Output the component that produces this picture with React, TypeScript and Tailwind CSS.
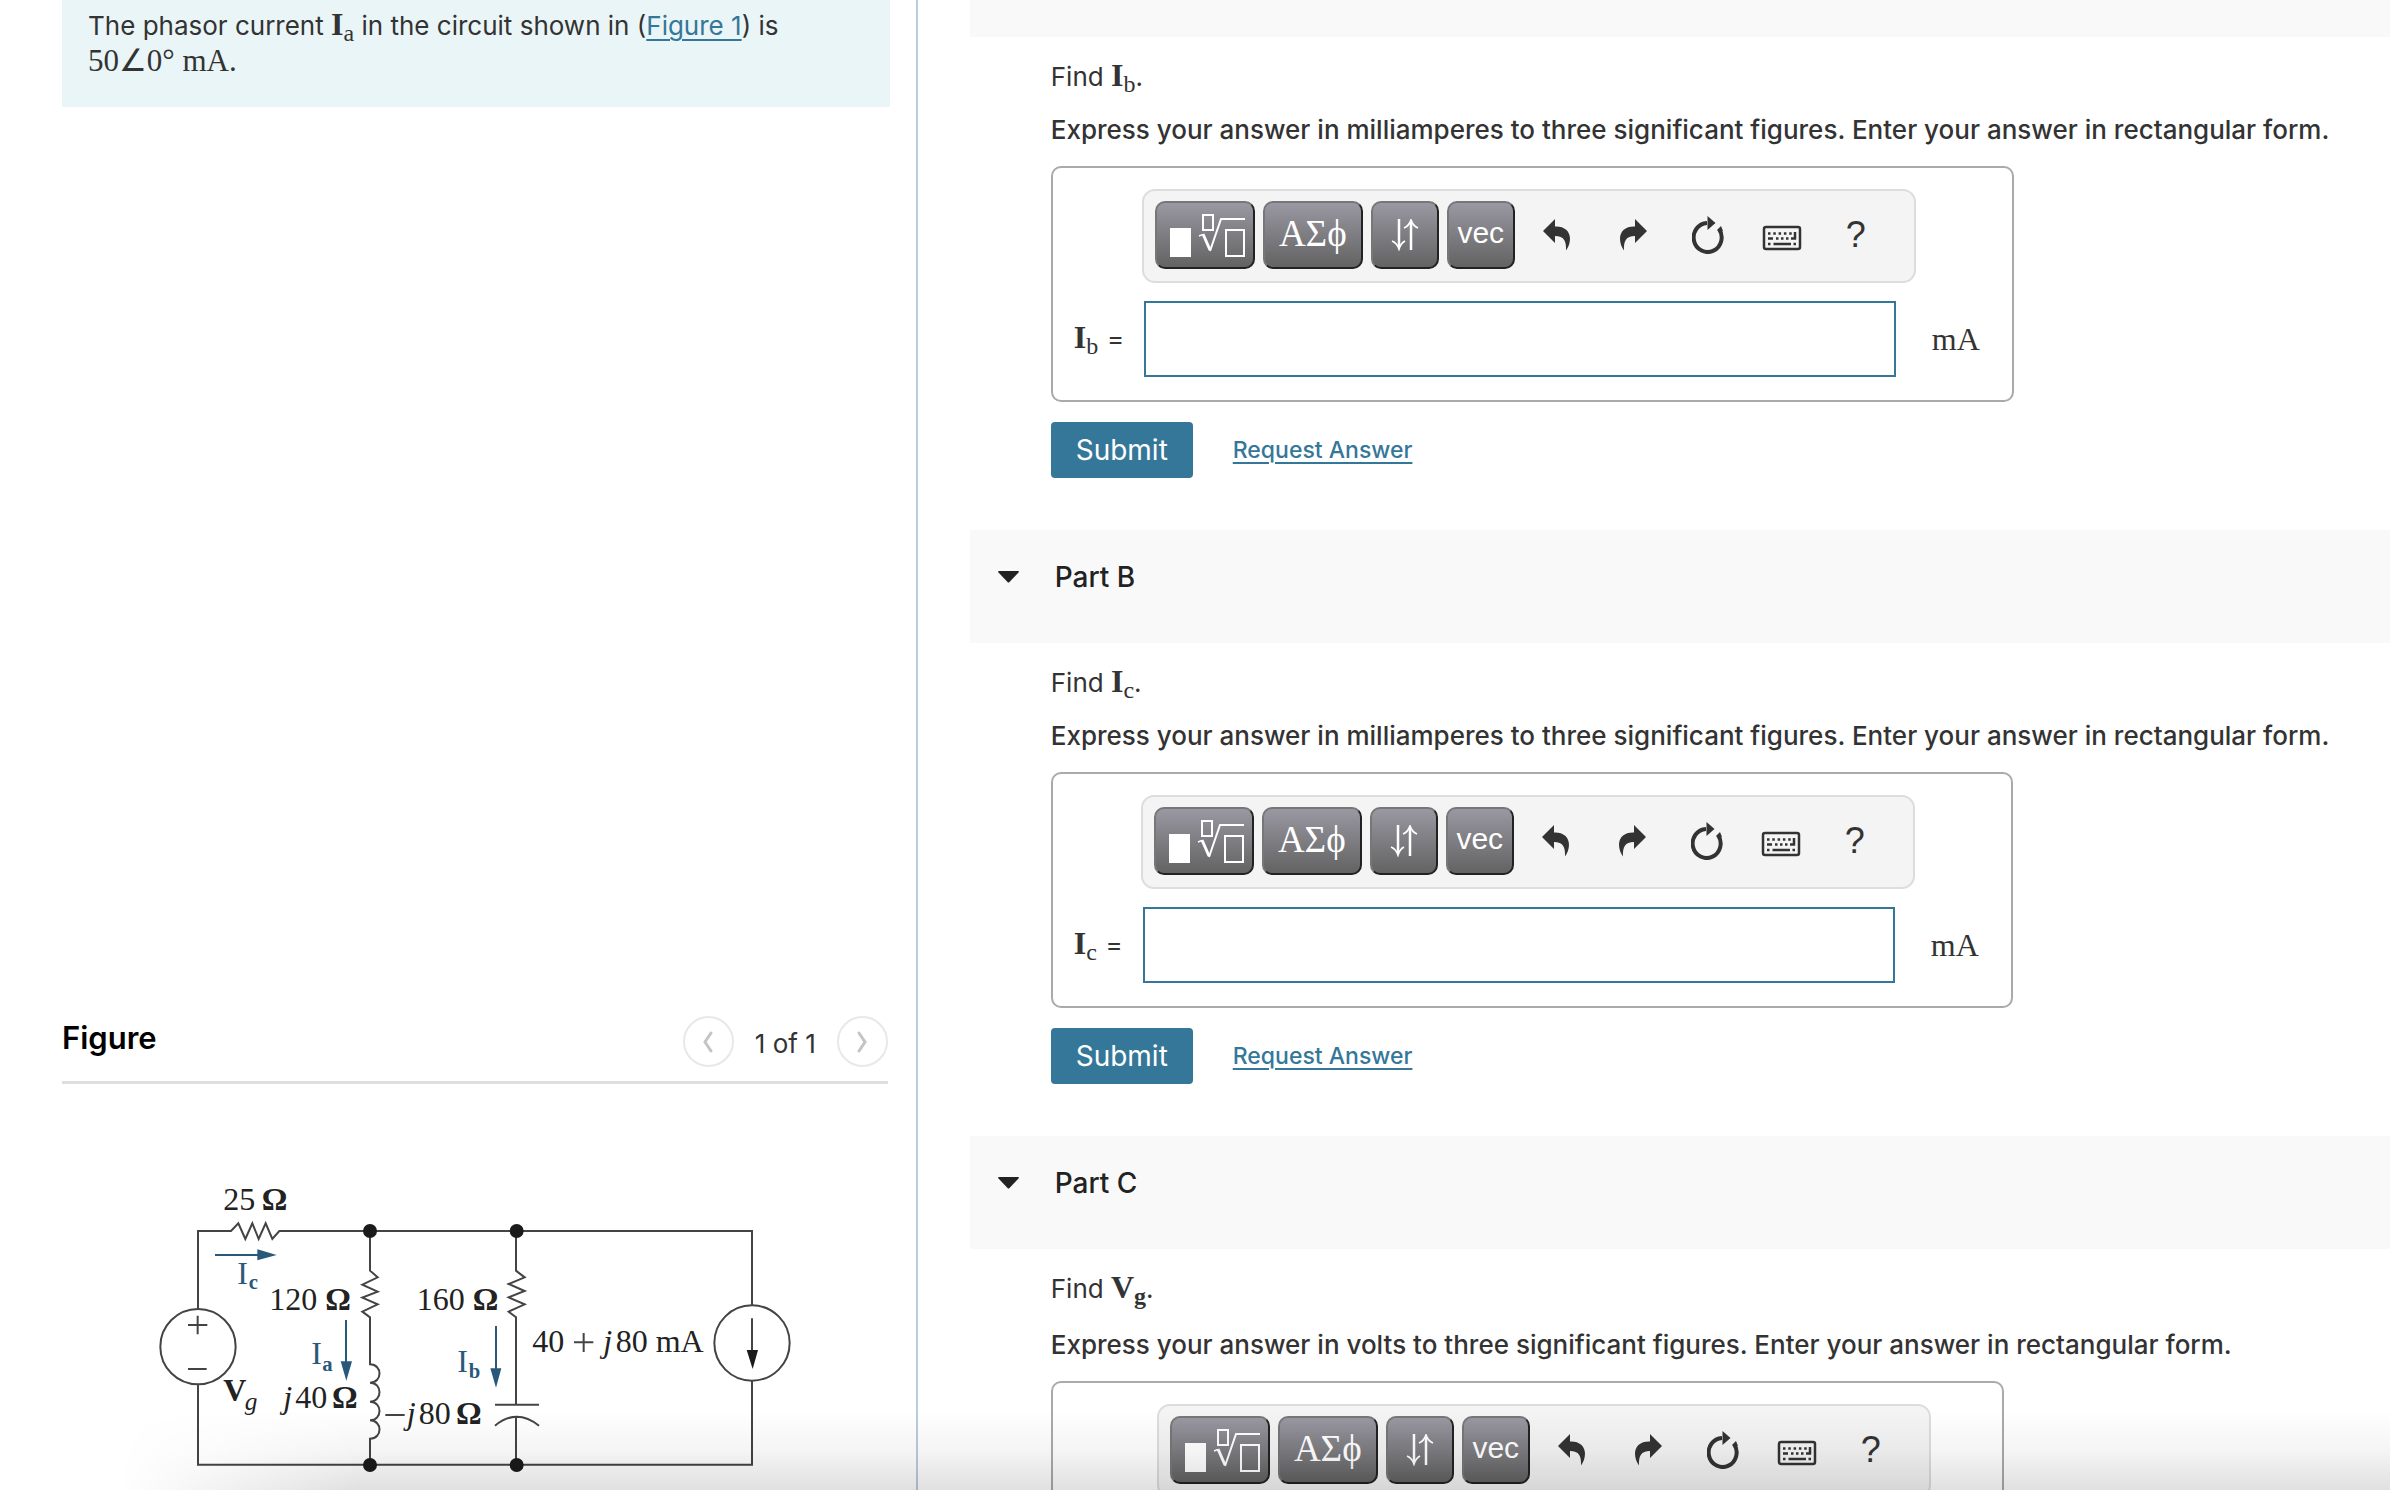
import React from "react";
import type { ReactNode } from "react";

const SERIF = "'Liberation Serif', serif";

function Sym({ base, sub, boldSub = false }: { base: string; sub: string; boldSub?: boolean }) {
  return (
    <span className="font-['Liberation_Serif',serif] text-[32px] leading-none">
      <b>{base}</b>
      <span className={boldSub ? "relative top-[6px] text-[24px] font-bold" : "relative top-[6px] text-[24px]"}>{sub}</span>
    </span>
  );
}

function DarkButton({ wide = false, label, children }: { wide?: boolean; label: string; children: ReactNode }) {
  return (
    <button
      type="button"
      aria-label={label}
      className={
        (wide ? "w-[100px]" : "w-[68px]") +
        " flex h-[68px] items-center justify-center rounded-[10px] border-2 border-t-[#777] border-r-[#222] border-b-[#222] border-l-[#777] bg-linear-to-b from-[#9a98a2] to-[#636363] text-white"
      }
    >
      {children}
    </button>
  );
}

function IconButton({ label, wide = false, children }: { label: string; wide?: boolean; children: ReactNode }) {
  return (
    <button
      type="button"
      aria-label={label}
      className={(wide ? "w-[76px]" : "w-[74px]") + " flex h-[68px] items-center justify-center text-[#333]"}
    >
      {children}
    </button>
  );
}

function CurvedArrow({ flip = false }: { flip?: boolean }) {
  return (
    <svg width="28" height="32" viewBox="0 0 28 32" className={flip ? "-scale-x-100" : ""} fill="currentColor">
      <path d="M0 12 L12 0 V7.500 C21 7 27 12 27 19.500 C27 24 25.500 28 23 31.500 C23.500 22 21 17 12 17 V24 Z" />
    </svg>
  );
}

function Toolbar() {
  return (
    <div className="col-span-2 flex h-[94px] w-[774px] items-start rounded-[13px] border-2 border-[#ddd] bg-[#f4f4f4] pt-2.5 pl-[11px]">
      <div className="flex gap-2">
        <DarkButton wide label="Templates">
          <svg width="84" height="60" viewBox="2 -1 84 60" fill="none" stroke="#fff">
            <rect x="9" y="22" width="21" height="29" fill="#fff" stroke="none" />
            <rect x="42" y="9" width="10" height="15" strokeWidth="2" />
            <path d="M38 30 L42 28.500" strokeWidth="1.500" />
            <path d="M42 28 L49 44" strokeWidth="3" />
            <path d="M49 45 L60 13 H84" strokeWidth="2" />
            <rect x="65" y="24" width="18" height="26" strokeWidth="2" />
          </svg>
        </DarkButton>
        <DarkButton wide label="Symbols">
          <span className="pb-1 font-['Liberation_Serif',serif] text-[37px] leading-none">ΑΣϕ</span>
        </DarkButton>
        <DarkButton label="Swap">
          <svg width="28" height="32" viewBox="0 0 28 32" fill="none" stroke="#fff" strokeWidth="2.500">
            <path d="M8 0 V28 M20 31 V3" />
            <path d="M1 22 Q6 24 8 30 Q10 24 14 22 M13 9 Q18 7 20 1 Q22 7 27 9" strokeWidth="1.800" />
          </svg>
        </DarkButton>
        <DarkButton label="Vector">
          <span className="pb-1 font-['Liberation_Sans',sans-serif] text-[30px] leading-none">vec</span>
        </DarkButton>
      </div>
      <div className="flex pl-1">
        <IconButton label="Undo" wide>
          <CurvedArrow />
        </IconButton>
        <IconButton label="Redo" wide>
          <CurvedArrow flip />
        </IconButton>
        <IconButton label="Reset">
          <svg width="32" height="38" viewBox="0 0 32 38" fill="none">
            <path d="M15 7 A14 14.500 0 1 0 27 13" stroke="currentColor" strokeWidth="4" />
            <path d="M15.500 0 L23.500 7 L15.500 14 Z" fill="currentColor" />
            <path d="M25 14 L29 10 L31 15 Z" fill="currentColor" />
          </svg>
        </IconButton>
        <IconButton label="Keyboard">
          <svg width="40" height="32" viewBox="0 -3 40 32" fill="none" stroke="currentColor">
            <rect x="2" y="5" width="36" height="22" rx="2" strokeWidth="2.500" />
            <path d="M6 11.500 H31" strokeWidth="2.500" strokeDasharray="2.500 2.800" />
            <path d="M6 16.500 H11 M14 16.500 H16.500 M19 16.500 H21.500 M24 16.500 H26.500 M29 16.500 H34 M33 10 V17.500" strokeWidth="2.500" />
            <path d="M6 22 H8.500 M11.500 22 H29 M31.500 22 H34" strokeWidth="2.500" />
          </svg>
        </IconButton>
        <IconButton label="Help">
          <span className="font-['Liberation_Sans',sans-serif] text-[36px] leading-none">?</span>
        </IconButton>
      </div>
    </div>
  );
}

type PartProps = {
  id: string;
  title?: string;
  symbol: ReactNode;
  quantity: string;
  unit: string;
  labelClass: string;
  findClass?: string;
};

function PartHeader({ title }: { title: string }) {
  return (
    <header className="flex h-[113px] bg-[#f9f9f9] pt-[29px] pl-7">
      <button type="button" className="flex h-9 items-center gap-9 text-[28px] leading-9 font-medium text-[#222]">
        <svg width="21" height="12" viewBox="0 0 21 12" fill="currentColor">
          <path d="M1 0 H20 Q21.500 0 20.500 1.500 L11.500 11 Q10.500 12 9.500 11 L0.500 1.500 Q-0.500 0 1 0 Z" />
        </svg>
        {title}
      </button>
    </header>
  );
}

function Part({ id, title, symbol, quantity, unit, labelClass, findClass = "h-9" }: PartProps) {
  return (
    <section>
      {title ? <PartHeader title={title} /> : <header className="h-[37px] bg-[#f9f9f9]" />}
      <div className="pt-[22px] pb-[52px] pl-[81px]">
        <p className={findClass + " text-[26px] leading-9"}>
          Find {symbol}.
        </p>
        <p className="mt-[17px] mb-[18px] text-[26px] leading-9 font-medium whitespace-nowrap">
          Express your answer in {quantity} to three significant figures. Enter your answer in rectangular form.
        </p>
        <div className="grid w-fit grid-cols-[auto_auto_auto] items-center gap-y-[18px] rounded-[10px] border-2 border-[#aaa] pt-[21px] pb-[23px] pl-[21px]">
          <span className={labelClass} />
          <Toolbar />
          <label htmlFor={id} className="text-[24px] leading-9 whitespace-nowrap">
            {symbol} <span className="pl-0.5 text-[26px]">=</span>
          </label>
          <input id={id} type="text" className="ml-0.5 h-[76px] w-[752px] border-2 border-[#357798] bg-white px-3 text-[26px] outline-none" />
          <span className="pr-8 pl-9 font-['Liberation_Serif',serif] text-[32px] leading-9">{unit}</span>
        </div>
        <div className="mt-5 flex items-center gap-10">
          <button type="button" className="h-14 w-[142px] rounded bg-[#357798] text-[28px] leading-none text-white">
            Submit
          </button>
          <a href="#answer" className="text-[23px] font-medium text-[#357798] underline decoration-2 underline-offset-4">
            Request Answer
          </a>
        </div>
      </div>
    </section>
  );
}

function PageButton({ label, path }: { label: string; path: string }) {
  return (
    <button type="button" aria-label={label} className="flex size-[51px] items-center justify-center rounded-full border-2 border-[#e8e8e8]">
      <svg width="16" height="24" viewBox="0 0 16 24" fill="none" stroke="#c4c4c4" strokeWidth="3" strokeLinecap="round">
        <path d={path} />
      </svg>
    </button>
  );
}

const CAPTIONS: [number, number, string][] = [
  [250, 150, "25"],
  [388, 450, "120"],
  [830, 450, "160"],
  [466, 743, "40"],
  [836, 791, "80"],
  [1177, 575, "40"],
  [1427, 575, "80"],
  [1547, 575, "mA"],
];

const OHMS: [number, number][] = [
  [365, 150],
  [556, 450],
  [998, 450],
  [576, 743],
  [948, 791],
];

const JS: [number, number][] = [
  [430, 743],
  [800, 791],
  [1390, 575],
];

function Circuit() {
  return (
    <svg width="660" height="330" viewBox="0 0 1980 990" className="ml-[140px] shrink-0" role="img" aria-label="Circuit diagram">
      <g fill="none" stroke="#444" strokeWidth="6">
        <path d="M174 447 V213 H273 L295 190 L316 237 L337 190 L356 237 L377 190 L397 237 L418 213 H1836 V437" />
        <path d="M174 673 V914 H1836 V662" />
        <circle cx="174" cy="560" r="113" />
        <circle cx="1836" cy="549" r="113" />
        <path d="M173 467 V523 M144 495 H202 M144 627 H200" />
        <path d="M690 213 V332 L713 352 L667 374 L713 395 L667 413 L713 433 L667 455 L690 472 V613 C728 613 728 668 690 668 C728 668 728 725 690 725 C728 725 728 781 690 781 C728 781 728 836 690 836 V914" />
        <path d="M1128 213 V332 L1154 352 L1106 372 L1154 393 L1106 412 L1154 433 L1106 455 L1128 472 V734 M1065 734 H1197 M1065 797 Q1130 743 1197 797 M1128 771 V914" />
        <path d="M1836 475 V580 M736 765 H794 M1302 547 H1360 M1331 519 V576" />
      </g>
      <g fill="#1b1b1b">
        <circle cx="690" cy="213" r="21" />
        <circle cx="1130" cy="213" r="21" />
        <circle cx="690" cy="915" r="21" />
        <circle cx="1130" cy="915" r="21" />
        <path d="M1820 570 H1854 L1838 627 Z" />
      </g>
      <g stroke="#28597a" strokeWidth="6">
        <path d="M225 285 H360 M618 480 V610 M1068 498 V630" />
      </g>
      <g fill="#28597a">
        <path d="M352 268 L410 285 L352 301 Z M602 604 H636 L619 662 Z M1051 625 H1084 L1068 683 Z" />
      </g>
      <g fill="#222" fontSize="96" fontFamily={SERIF}>
        {CAPTIONS.map(([x, y, t]) => (
          <text key={x + "-" + y} x={x} y={y}>
            {t}
          </text>
        ))}
        {OHMS.map(([x, y]) => (
          <text key={x + "-" + y} x={x} y={y} fontWeight="700">
            Ω
          </text>
        ))}
        {JS.map(([x, y]) => (
          <text key={x + "-" + y} x={x} y={y} fontStyle="italic">
            j
          </text>
        ))}
        <text x="250" y="722" fontWeight="700">
          V
        </text>
        <text x="314" y="750" fontSize="76" fontStyle="italic">
          g
        </text>
      </g>
      <g fill="#28597a" fontSize="96" fontFamily={SERIF}>
        <text x="292" y="373">I</text>
        <text x="326" y="388" fontSize="62" fontWeight="700">c</text>
        <text x="514" y="612">I</text>
        <text x="547" y="634" fontSize="62" fontWeight="700">a</text>
        <text x="952" y="636">I</text>
        <text x="986" y="653" fontSize="62" fontWeight="700">b</text>
      </g>
    </svg>
  );
}

export default function App() {
  return (
    <div className="relative flex h-screen overflow-hidden bg-white font-['Inter',sans-serif] text-[#333]">
      <main className="flex w-[38.4%] shrink-0 flex-col border-r-2 border-[#bccbdd]">
        <div className="flex-1 pr-[26px] pl-[62px]">
          <p className="bg-[#eaf5f7] pt-2 pb-[27px] pl-[26px] text-[26px] leading-9">
            The phasor current <Sym base="I" sub="a" /> in the circuit shown in (
            <a href="#figure" className="text-[#357798] underline decoration-2 underline-offset-4">
              Figure 1
            </a>
            ) is
            <br />
            <span className="font-['Liberation_Serif','DejaVu_Sans',serif] text-[31px] leading-none">50∠0° mA.</span>
          </p>
        </div>
        <section id="figure" className="-mr-px border-r border-[#bccbdd]">
          <div className="mr-[28px] ml-[62px] flex items-center border-b-[3px] border-[#dfdfdf] pt-[13px] pb-[14px]">
            <h2 className="pb-2 text-[31px] leading-9 font-semibold text-black">Figure</h2>
            <div className="ml-auto flex items-center gap-[21px]">
              <PageButton label="Previous figure" path="M11 3 L5 12 L11 21" />
              <span className="pt-1 text-[26px]">1 of 1</span>
              <PageButton label="Next figure" path="M5 3 L11 12 L5 21" />
            </div>
          </div>
          <div className="pt-[76px]">
            <Circuit />
          </div>
        </section>
      </main>
      <div className="min-w-0 flex-1 pl-[52px]">
        <Part id="current-b" symbol={<Sym base="I" sub="b" />} quantity="milliamperes" unit="mA" labelClass="w-[68px]" />
        <Part id="current-c" title="Part B" symbol={<Sym base="I" sub="c" />} quantity="milliamperes" unit="mA" labelClass="w-[67px]" />
        <Part id="voltage-g" title="Part C" symbol={<Sym base="V" sub="g" boldSub />} quantity="volts" unit="V" labelClass="w-[83px]" findClass="h-[39px]" />
      </div>
      <div className="pointer-events-none absolute inset-x-0 bottom-0 h-20 bg-linear-to-t from-black/12 via-black/4 to-transparent mask-l-from-85% mask-l-to-95%" />
    </div>
  );
}
